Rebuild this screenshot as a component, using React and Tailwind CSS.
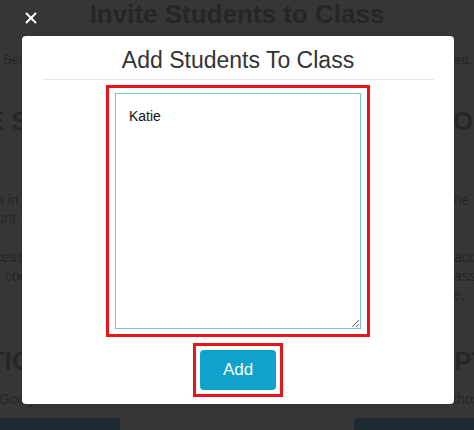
import { X } from 'lucide-react';

const BackgroundPage = () => (
  <div className="flex flex-col text-[#262626]">
    <h1 className="text-center text-[26px] font-bold leading-[28px]">Invite Students to Class</h1>

    <div className="mt-[23px] flex text-[13px] leading-[18px] whitespace-nowrap">
      <div className="w-[450px] shrink-0 pl-[3px]">Select the students you want to invite</div>
      <div className="w-[200px] shrink-0 -ml-[25px]">needed.</div>
    </div>

    {/* section headings */}
    <div className="mt-[38px] flex text-[26px] font-bold leading-[28px] whitespace-nowrap">
      <div className="w-[450px] shrink-0 -ml-[101px]">CREATE STUDENTS</div>
      <div className="w-[200px] shrink-0 ml-[85px]">ROSTER</div>
    </div>

    <div className="mt-[56px] flex text-[14px] leading-[18px] whitespace-nowrap">
      <div className="w-[450px] shrink-0 flex flex-col">
        <span className="-ml-[22px]">sign in with their</span>
        <span className="-ml-[33px]">account.</span>
      </div>
      <div className="w-[200px] shrink-0 flex flex-col">
        <span>the students</span>
      </div>
    </div>

    <div className="mt-[21px] flex text-[14px] leading-[19px] whitespace-nowrap">
      <div className="w-[450px] shrink-0 flex flex-col">
        <span className="-ml-[20px]">access</span>
        <span className="-ml-[7px]">a code</span>
      </div>
      <div className="w-[200px] shrink-0 flex flex-col">
        <span className="ml-[4px]">account</span>
        <span className="-ml-[6px]">class</span>
        <span className="ml-[3px]">e,</span>
      </div>
    </div>

    <div className="mt-[42px] flex text-[26px] font-bold leading-[28px] whitespace-nowrap">
      <div className="w-[450px] shrink-0 -ml-[123px]">AUTOMATIC</div>
      <div className="w-[200px] shrink-0 ml-[107px]">OPTIONS</div>
    </div>

    <div className="mt-[15px] flex text-[14px] leading-[19px] whitespace-nowrap">
      <div className="w-[450px] shrink-0 -ml-[1px]">Google</div>
      <div className="w-[200px] shrink-0 ml-[4px]">those</div>
    </div>

    <div className="mt-[9px] flex justify-between">
      <div className="h-[30px] w-[120px] rounded-tr-[3px] bg-[#1e2a31]" />
      <div className="h-[30px] w-[120px] rounded-tl-[3px] bg-[#1e2a31]" />
    </div>
  </div>
);

export default function App() {
  return (
    <div className="relative h-[430px] w-[474px] overflow-hidden bg-[#363636] font-['Liberation_Sans',Arial,sans-serif]">
      <BackgroundPage />

      {/* close */}
      <button className="absolute left-[22px] top-[9px] text-white">
        <X className="h-[18px] w-[18px]" strokeWidth={2.6} />
      </button>

      {/* modal */}
      <div className="absolute left-[22px] top-[36px] flex h-[368px] w-[432px] flex-col items-center rounded-[4px] bg-white">
        <h2 className="mt-[11px] text-[23px] leading-[26px] text-[#333]">Add Students To Class</h2>
        <div className="mt-[6px] h-px w-[391px] bg-[#e6e6e6]" />

        <div className="mt-[5px] border-[3px] border-[#e8141c] px-[6px] py-[5px]">
          <textarea
            className="block h-[236px] w-[246px] border border-[#79c6d8] bg-white px-[13px] pt-[12px] text-[14px] leading-[20px] text-[#111] outline-none"
            defaultValue="Katie"
          />
        </div>

        <div className="mt-[6px] border-[3px] border-[#e8141c] p-[4px]">
          <button className="h-[40px] w-[76px] rounded-[4px] bg-[#0ea2cc] text-[17px] text-white">
            Add
          </button>
        </div>
      </div>
    </div>
  );
}
